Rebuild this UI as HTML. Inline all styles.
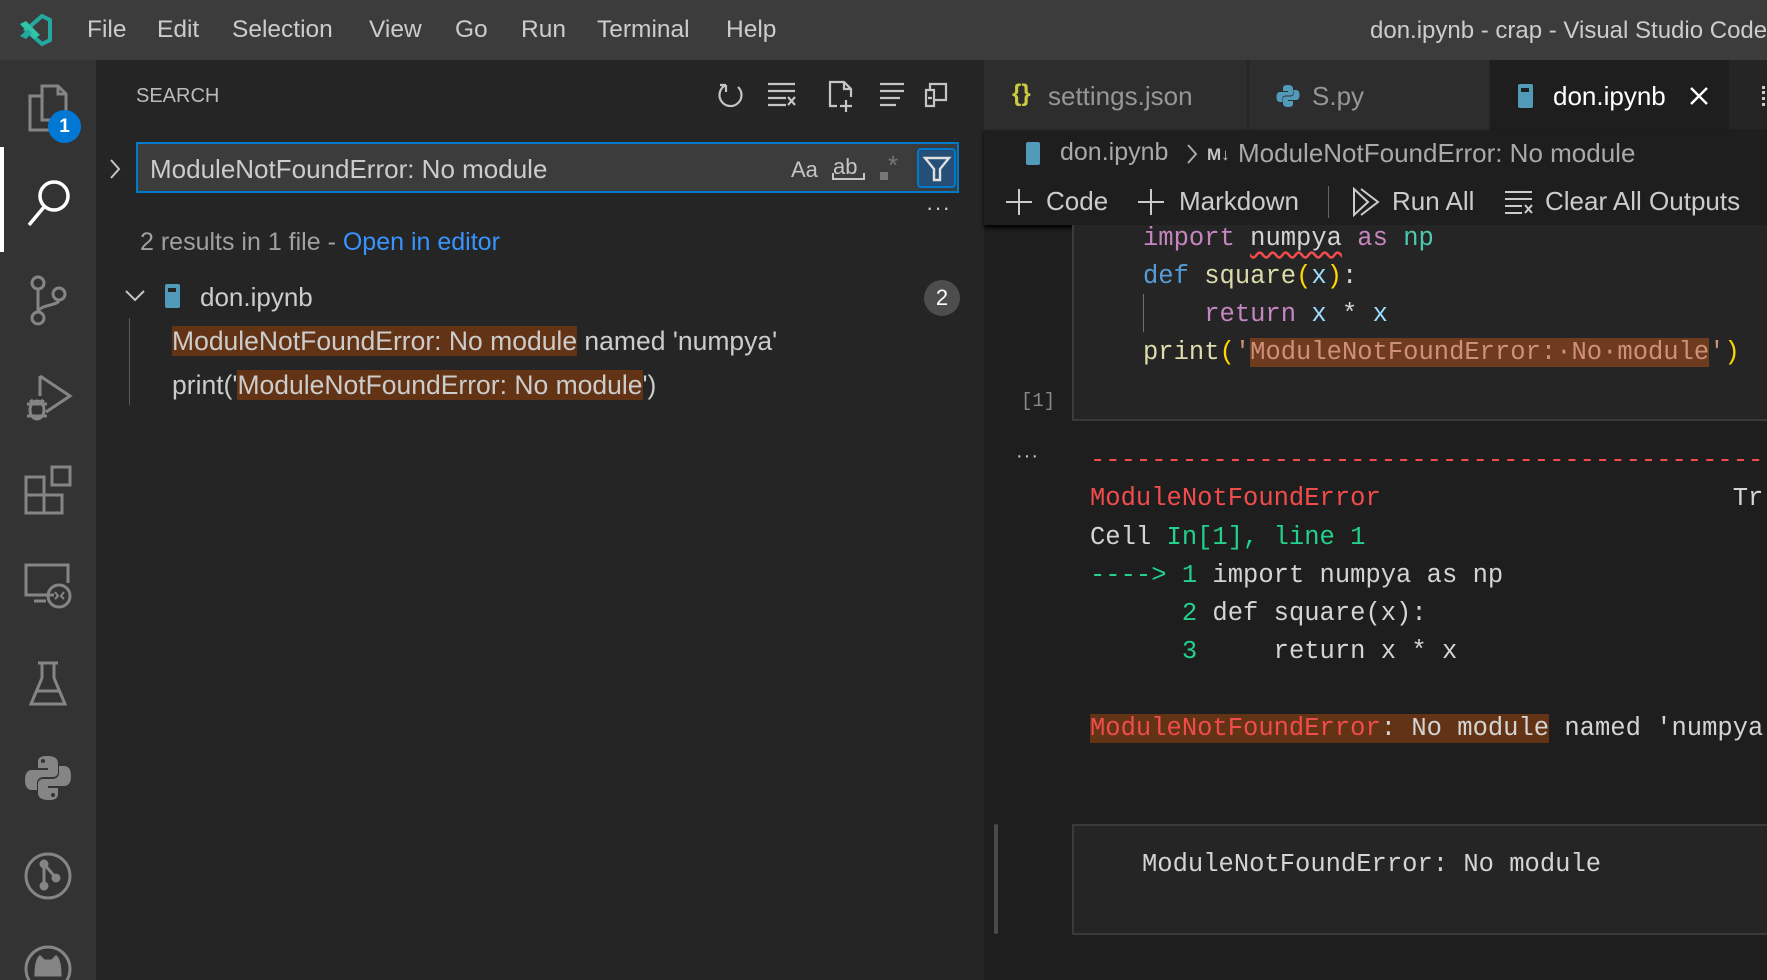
<!DOCTYPE html>
<html><head><meta charset="utf-8"><style>
*{margin:0;padding:0;box-sizing:border-box}
html,body{width:1767px;height:980px;overflow:hidden}
body{background:#1e1e1e;font-family:"Liberation Sans",sans-serif;color:#ccc;position:relative}
.a{position:absolute;white-space:nowrap}
.mono{font-family:"Liberation Mono",monospace;font-size:25.5px}
.mono div{white-space:pre}
svg{position:absolute;overflow:visible}
</style></head><body>
<!-- title bar -->
<div class="a" style="left:0;top:0;width:1767px;height:60px;background:#3c3c3c;overflow:hidden">
<div class="a" style="top:17px;font-size:24px;color:#ccc;left:1370px">don.ipynb - crap - Visual Studio Code</div>
</div>
<svg style="left:18px;top:14px" width="34" height="32" viewBox="0 0 34 32"><path d="M24 2 L32 6 V26 L24 30 L8 16 Z" fill="none" stroke="#23a9a0" stroke-width="4"/><path d="M2 10 L8 7 L22 21 L16 25 Z" fill="#2fc5a6"/><path d="M2 22 L8 25 L14 19 L10 15 Z" fill="#23a9a0"/></svg>
<div class="a" style="top:16px;font-size:24.5px;color:#ccc;left:87px">File</div>
<div class="a" style="top:16px;font-size:24.5px;color:#ccc;left:157px">Edit</div>
<div class="a" style="top:16px;font-size:24.5px;color:#ccc;left:232px">Selection</div>
<div class="a" style="top:16px;font-size:24.5px;color:#ccc;left:369px">View</div>
<div class="a" style="top:16px;font-size:24.5px;color:#ccc;left:455px">Go</div>
<div class="a" style="top:16px;font-size:24.5px;color:#ccc;left:521px">Run</div>
<div class="a" style="top:16px;font-size:24.5px;color:#ccc;left:597px">Terminal</div>
<div class="a" style="top:16px;font-size:24.5px;color:#ccc;left:726px">Help</div>
<!-- activity bar -->
<div class="a" style="left:0;top:60px;width:96px;height:920px;background:#333"></div>
<div class="a" style="left:0;top:147px;width:4px;height:105px;background:#fff"></div>
<svg style="left:26px;top:84px" width="46" height="50" viewBox="0 0 46 50" fill="none" stroke="#858585" stroke-width="3"><path d="M16 2 H32 L40 10 V36 H16 Z M32 2 V10 H40"/><path d="M16 12 H4 V46 H28 V36"/></svg>
<div class="a" style="left:48px;top:110px;width:33px;height:33px;border-radius:50%;background:#0078d4;color:#fff;font-size:19px;font-weight:bold;text-align:center;line-height:33px">1</div>
<svg style="left:26px;top:178px" width="48" height="50" viewBox="0 0 48 50" fill="none" stroke="#fff" stroke-width="3.5"><circle cx="28" cy="18" r="14"/><path d="M18 29 L3 47"/></svg>
<svg style="left:28px;top:274px" width="40" height="52" viewBox="0 0 40 52" fill="none" stroke="#858585" stroke-width="3"><circle cx="10" cy="9" r="6"/><circle cx="10" cy="44" r="6"/><circle cx="31" cy="20" r="6"/><path d="M10 15 V38 M31 26 C31 32 12 30 10 38"/></svg>
<svg style="left:24px;top:372px" width="50" height="50" viewBox="0 0 50 50" fill="none" stroke="#858585" stroke-width="3"><path d="M16 4 L46 24 L22 40"/><path d="M16 4 V24"/><ellipse cx="13" cy="38" rx="7" ry="9"/><path d="M3 32 H23 M3 44 H23 M6 30 L9 28 M20 30 L17 28"/></svg>
<svg style="left:24px;top:465px" width="50" height="50" viewBox="0 0 50 50" fill="none" stroke="#858585" stroke-width="3"><rect x="2" y="12" width="18" height="18"/><rect x="2" y="30" width="18" height="18"/><rect x="20" y="30" width="18" height="18"/><rect x="28" y="2" width="18" height="18"/></svg>
<svg style="left:24px;top:561px" width="50" height="50" viewBox="0 0 50 50" fill="none" stroke="#858585" stroke-width="3"><path d="M30 34 H2 V4 H44 V22 M10 40 H22"/><circle cx="35" cy="35" r="11"/><path d="M31 31 L34 35 L31 38 M40 31 L37 35 L40 38" stroke-width="2"/></svg>
<svg style="left:28px;top:660px" width="40" height="48" viewBox="0 0 40 48" fill="none" stroke="#858585" stroke-width="3"><path d="M10 3 H30 M14 3 V18 L3 44 H37 L26 18 V3 M8 31 H32"/></svg>
<svg style="left:24px;top:754px" width="48" height="48" viewBox="0 0 48 48" fill="#858585"><path d="M23 2 C14 2 14 6 14 9 V14 H24 V16 H8 C3 16 1 20 1 26 C1 32 3 36 8 36 H13 V29 C13 25 16 23 20 23 H29 C32 23 34 21 34 18 V9 C34 5 31 2 23 2 Z"/><path d="M25 46 C34 46 34 42 34 39 V34 H24 V32 H40 C45 32 47 28 47 22 C47 16 45 12 40 12 H35 V19 C35 23 32 25 28 25 H19 C16 25 14 27 14 30 V39 C14 43 17 46 25 46 Z"/><circle cx="19" cy="7" r="2" fill="#333"/><circle cx="29" cy="41" r="2" fill="#333"/></svg>
<svg style="left:24px;top:852px" width="50" height="50" viewBox="0 0 50 50" fill="none" stroke="#858585" stroke-width="3"><circle cx="24" cy="24" r="22"/><circle cx="20" cy="12" r="3" fill="#858585"/><circle cx="32" cy="26" r="3" fill="#858585"/><circle cx="20" cy="34" r="3" fill="#858585"/><path d="M20 12 V34 M20 12 L32 26"/></svg>
<div class="a" style="left:24px;top:945px;width:50px;height:35px;overflow:hidden"><svg style="left:0;top:0" width="50" height="50" viewBox="0 0 50 50" fill="none" stroke="#858585" stroke-width="3"><circle cx="24" cy="24" r="22"/><path d="M12 30 C12 20 14 14 16 12 L20 16 H28 L32 12 C34 14 36 20 36 30 Z" fill="#858585"/></svg></div>
<!-- sidebar -->
<div class="a" style="left:96px;top:60px;width:888px;height:920px;background:#252526"></div>
<div class="a" style="left:136px;top:85px;font-size:20px;color:#bbb">SEARCH</div>
<svg style="left:716px;top:80px" width="240" height="30" viewBox="0 0 240 30" fill="none" stroke="#c5c5c5" stroke-width="2.2">
<path d="M8 5 A11 11 0 1 0 20 7 M8 5 V12 M8 5 H2" transform="translate(2,0)"/>
<path d="M52 4 H79 M52 11 H79 M52 18 H70 M52 25 H70 M72 17 L79 25 M79 17 L72 25"/>
<path d="M121 26 H114 V2 H128 L135 9 V17 M128 2 V9 H135 M130 20 V32 M124 26 H136"/>
<path d="M164 4 H188 M164 11 H188 M164 18 H184 M164 25 H180"/>
<path d="M210 10 H218 V26 H210 Z M214 10 V4 H230 V20 H218 M212 18 H216"/>
</svg>
<svg style="left:108px;top:158px" width="14" height="22" viewBox="0 0 14 22" fill="none" stroke="#c5c5c5" stroke-width="2"><path d="M3 2 L11 11 L3 20"/></svg>
<div class="a" style="left:136px;top:142px;width:823px;height:51px;background:#3c3c3c;border:2px solid #007acc"></div>
<div class="a" style="left:150px;top:154px;font-size:26px;color:#ccc">ModuleNotFoundError: No module</div>
<div class="a" style="left:791px;top:157px;font-size:22px;color:#c5c5c5">Aa</div>
<div class="a" style="left:833px;top:154px;font-size:22px;color:#c5c5c5">ab</div>
<svg style="left:832px;top:172px" width="34" height="10" viewBox="0 0 34 10" fill="none" stroke="#c5c5c5" stroke-width="2"><path d="M1 1 V7 H32 V1"/></svg>
<div class="a" style="left:880px;top:172px;width:8px;height:8px;background:#777"></div>
<div class="a" style="left:888px;top:150px;font-size:26px;color:#777">*</div>
<div class="a" style="left:917px;top:148px;width:39px;height:40px;background:#264f78;border:2px solid #007acc;border-radius:4px"></div>
<svg style="left:922px;top:155px" width="30" height="28" viewBox="0 0 30 28" fill="none" stroke="#e0e0e0" stroke-width="2.4"><path d="M3 3 H27 L18 14 V25 H12 V14 Z"/></svg>
<div class="a" style="left:926px;top:195px;font-size:22px;color:#ccc;letter-spacing:1px">···</div>
<div class="a" style="left:140px;top:228px;font-size:25px;color:#a0a0a0">2 results in 1 file - <span style="color:#3794ff">Open in editor</span></div>
<svg style="left:124px;top:289px" width="22" height="14" viewBox="0 0 22 14" fill="none" stroke="#c5c5c5" stroke-width="2"><path d="M2 2 L11 11 L20 2"/></svg>
<div class="a" style="left:165px;top:284px;width:15px;height:24px;background:#519aba;border-radius:2px"></div>
<div class="a" style="left:168px;top:288px;width:8px;height:4px;background:#252526"></div>
<div class="a" style="left:200px;top:282px;font-size:26px;color:#ccc">don.ipynb</div>
<div class="a" style="left:924px;top:280px;width:36px;height:36px;border-radius:50%;background:#4d4d4d;color:#fff;font-size:22px;text-align:center;line-height:36px">2</div>
<div class="a" style="left:129px;top:318px;width:1px;height:87px;background:#585858"></div>
<div class="a" style="left:172px;top:322px;font-size:26.5px;color:#ccc;line-height:38px"><span style="background:#623315">ModuleNotFoundError: No module</span> named 'numpya'</div>
<div class="a" style="left:172px;top:366px;font-size:26.5px;color:#ccc;line-height:38px">print('<span style="background:#623315">ModuleNotFoundError: No module</span>')</div>
<!-- editor tabs -->
<div class="a" style="left:984px;top:60px;width:783px;height:70px;background:#252526"></div>
<div class="a" style="left:984px;top:60px;width:264px;height:70px;background:#2d2d2d;border-right:1px solid #252526"></div>
<div class="a" style="left:1249px;top:60px;width:240px;height:70px;background:#2d2d2d"></div>
<div class="a" style="left:1490px;top:60px;width:239px;height:70px;background:#1e1e1e"></div>
<div class="a" style="left:1012px;top:80px;font-size:24px;color:#cbcb41;font-weight:bold">{}</div>
<div class="a" style="left:1048px;top:81px;font-size:26px;color:#969696">settings.json</div>
<svg style="left:1276px;top:84px" width="24" height="24" viewBox="0 0 48 48" fill="#519aba"><path d="M23 2 C14 2 14 6 14 9 V14 H24 V16 H8 C3 16 1 20 1 26 C1 32 3 36 8 36 H13 V29 C13 25 16 23 20 23 H29 C32 23 34 21 34 18 V9 C34 5 31 2 23 2 Z"/><path d="M25 46 C34 46 34 42 34 39 V34 H24 V32 H40 C45 32 47 28 47 22 C47 16 45 12 40 12 H35 V19 C35 23 32 25 28 25 H19 C16 25 14 27 14 30 V39 C14 43 17 46 25 46 Z"/></svg>
<div class="a" style="left:1312px;top:81px;font-size:26px;color:#969696">S.py</div>
<div class="a" style="left:1518px;top:84px;width:15px;height:24px;background:#519aba;border-radius:2px"></div>
<div class="a" style="left:1521px;top:88px;width:8px;height:4px;background:#1e1e1e"></div>
<div class="a" style="left:1553px;top:81px;font-size:26px;color:#fff">don.ipynb</div>
<svg style="left:1689px;top:86px" width="20" height="20" viewBox="0 0 20 20" stroke="#fff" stroke-width="2.4"><path d="M2 2 L18 18 M18 2 L2 18"/></svg>
<div class="a" style="left:1762px;top:86px;width:5px;height:20px;border-left:3px dotted #ccc"></div>
<!-- breadcrumb & toolbar -->
<div class="a" style="left:984px;top:130px;width:783px;height:95px;background:#1e1e1e;box-shadow:0 3px 4px #000"></div>
<div class="a" style="left:1026px;top:142px;width:14px;height:23px;background:#519aba;border-radius:2px"></div>
<div class="a" style="left:1060px;top:138px;font-size:25px;color:#a9a9a9">don.ipynb</div>
<svg style="left:1186px;top:143px" width="12" height="22" viewBox="0 0 12 22" fill="none" stroke="#a9a9a9" stroke-width="2"><path d="M2 2 L10 11 L2 20"/></svg>
<div class="a" style="left:1207px;top:145px;font-size:17px;color:#c5c5c5;font-weight:bold">M↓</div>
<div class="a" style="left:1238px;top:138px;font-size:26px;color:#a9a9a9">ModuleNotFoundError: No module</div>
<svg style="left:1005px;top:188px" width="28" height="28" viewBox="0 0 28 28" stroke="#ccc" stroke-width="2"><path d="M14 1 V27 M1 14 H27"/></svg>
<div class="a" style="left:1046px;top:186px;font-size:26px;color:#ccc">Code</div>
<svg style="left:1137px;top:188px" width="28" height="28" viewBox="0 0 28 28" stroke="#ccc" stroke-width="2"><path d="M14 1 V27 M1 14 H27"/></svg>
<div class="a" style="left:1179px;top:186px;font-size:26px;color:#ccc">Markdown</div>
<div class="a" style="left:1328px;top:186px;width:1px;height:32px;background:#666"></div>
<svg style="left:1352px;top:187px" width="28" height="30" viewBox="0 0 28 30" fill="none" stroke="#ccc" stroke-width="2"><path d="M2 2 L16 15 L2 28 Z M9 2 L26 15 L9 28"/></svg>
<div class="a" style="left:1392px;top:186px;font-size:26px;color:#ccc">Run All</div>
<svg style="left:1504px;top:190px" width="30" height="26" viewBox="0 0 30 26" fill="none" stroke="#ccc" stroke-width="2"><path d="M1 2 H28 M1 9 H28 M1 16 H18 M1 23 H18 M21 15 L28 23 M28 15 L21 23"/></svg>
<div class="a" style="left:1545px;top:186px;font-size:26px;color:#ccc">Clear All Outputs</div>
<!-- code cell -->
<div class="a" style="left:1072px;top:225px;width:695px;height:196px;background:#252526;border-left:2px solid #3a3a3c;border-bottom:2px solid #3a3a3c"></div>
<div class="a mono" style="left:1143px;top:220px;line-height:38px;color:#d4d4d4">
<div><span style="color:#c586c0">import</span> <span style="text-decoration:underline wavy #f14c4c;text-underline-offset:6px">numpya</span> <span style="color:#c586c0">as</span> <span style="color:#4ec9b0">np</span></div>
<div><span style="color:#569cd6">def</span> <span style="color:#dcdcaa">square</span><span style="color:#ffd700">(</span><span style="color:#9cdcfe">x</span><span style="color:#ffd700">)</span>:</div>
<div>    <span style="color:#c586c0">return</span> <span style="color:#9cdcfe">x</span> * <span style="color:#9cdcfe">x</span></div>
<div><span style="color:#dcdcaa">print</span><span style="color:#ffd700">(</span><span style="color:#ce9178">'<span style="background:#6e3b1e">ModuleNotFoundError:·No·module</span>'</span><span style="color:#ffd700">)</span></div>
</div>
<div class="a" style="left:1143px;top:294px;width:1px;height:38px;background:#707070"></div>
<div class="a mono" style="left:1021px;top:390px;font-size:19px;color:#888">[1]</div>
<!-- output -->
<div class="a" style="left:1016px;top:445px;font-size:20px;color:#ccc;letter-spacing:1px">···</div>
<div class="a" style="left:1090px;top:442px;width:677px;height:320px;overflow:hidden">
<div class="a mono" style="left:0;top:0;line-height:38.3px;color:#d4d4d4">
<div style="color:#f14c4c">--------------------------------------------</div>
<div><span style="color:#f14c4c">ModuleNotFoundError</span>                       Tr</div>
<div>Cell <span style="color:#23d18b">In[1], line 1</span></div>
<div><span style="color:#23d18b">----&gt; 1</span> import numpya as np</div>
<div><span style="color:#23d18b">      2</span> def square(x):</div>
<div><span style="color:#23d18b">      3</span>     return x * x</div>
<div> </div>
<div><span style="background:#623315"><span style="color:#f14c4c">ModuleNotFoundError</span>: No module</span> named 'numpya'</div>
</div>
</div>
<!-- markdown cell -->
<div class="a" style="left:994px;top:824px;width:4px;height:110px;background:#4a4a4a;border-radius:2px"></div>
<div class="a" style="left:1072px;top:824px;width:695px;height:111px;background:#252526;border:2px solid #3a3a3c;border-right:none"></div>
<div class="a mono" style="left:1142px;top:850px;color:#d4d4d4">ModuleNotFoundError: No module</div>
</body></html>
